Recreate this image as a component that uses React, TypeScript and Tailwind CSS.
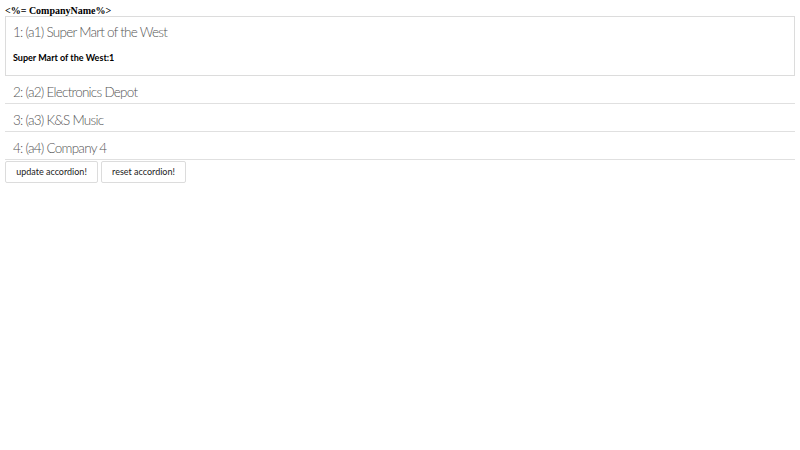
const items = [
  { id: "a1", name: "Super Mart of the West", open: true },
  { id: "a2", name: "Electronics Depot" },
  { id: "a3", name: "K&S Music" },
  { id: "a4", name: "Company 4" },
];

export default function App() {
  return (
    <div className="min-h-[450px] bg-white p-[5px] font-['Lato',sans-serif]">
      <div className="font-['Liberation_Serif',serif] text-[10px] leading-[11px] font-bold text-black h-[11px]">
        &lt;%= CompanyName%&gt;
      </div>
      <div>
        {items.map((it, i) =>
          it.open ? (
            <div key={it.id} className="border border-[#dcdcdc] h-[60px] px-[7px]">
              <div className="h-[30px] flex items-center text-[13.5px] tracking-[-0.75px] font-light text-[#555]">
                {i + 1}: ({it.id}) {it.name}
              </div>
              <div className="mt-[4px] text-[9px] font-bold text-black">
                {it.name}:{i + 1}
              </div>
            </div>
          ) : (
            <div
              key={it.id}
              className="h-[28px] border-b border-[#e0e0e0] px-[8px] pt-[7px] text-[13.5px] tracking-[-0.75px] leading-[18px] font-light text-[#555]"
            >
              {i + 1}: ({it.id}) {it.name}
            </div>
          )
        )}
      </div>
      <div className="flex gap-[3px] mt-[1px]">
        <button className="h-[22px] w-[93px] border border-[#dcdcdc] rounded-[2px] bg-white text-[9px] text-[#222]">
          update accordion!
        </button>
        <button className="h-[22px] w-[85px] border border-[#dcdcdc] rounded-[2px] bg-white text-[9px] text-[#222]">
          reset accordion!
        </button>
      </div>
    </div>
  );
}
